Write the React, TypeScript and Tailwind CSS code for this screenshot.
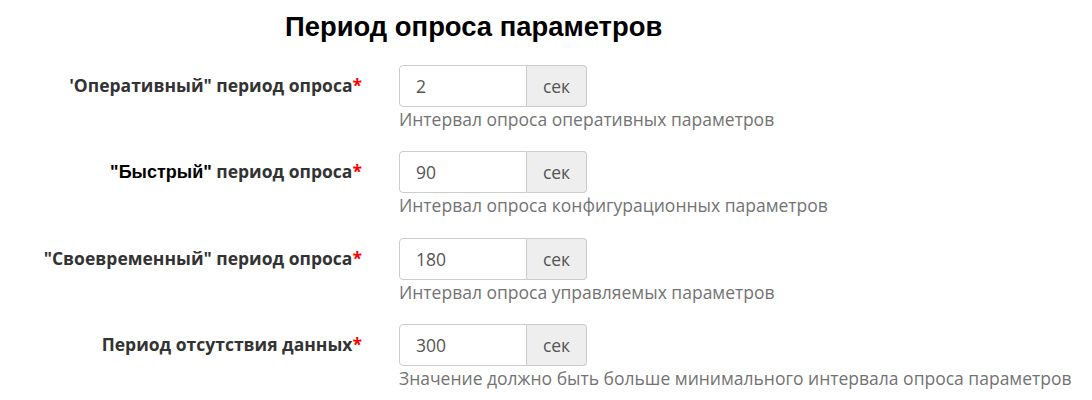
const openSans = { fontFamily: '"Open Sans", "Liberation Sans", sans-serif' };

type Row = {
  label: React.ReactNode;
  value: string;
  help: string;
};

const rows: Row[] = [
  {
    label: <>'Оперативный" период опроса</>,
    value: '2',
    help: 'Интервал опроса оперативных параметров',
  },
  {
    label: (
      <>
        <span className="font-['Liberation_Sans',Arial,sans-serif] text-[18px] text-black">"Быстрый"</span> период опроса
      </>
    ),
    value: '90',
    help: 'Интервал опроса конфигурационных параметров',
  },
  {
    label: <>"Своевременный" период опроса</>,
    value: '180',
    help: 'Интервал опроса управляемых параметров',
  },
  {
    label: <>Период отсутствия данных</>,
    value: '300',
    help: 'Значение должно быть больше минимального интервала опроса параметров',
  },
];

function FieldRow({ row }: { row: Row }) {
  return (
    <div className="flex items-start">
      <div className="flex h-[42px] w-[362px] shrink-0 items-center justify-end">
        <span className="text-[17.5px] font-bold leading-none text-[#333]">
          {row.label}
          <span className="text-[#ff0000]">*</span>
        </span>
      </div>
      <div className="ml-[37px] flex flex-col">
        <div className="flex h-[42px]">
          <input
            readOnly
            value={row.value}
            className="h-[42px] w-[128px] rounded-l-[4px] border border-[#ccc] bg-white px-[16px] text-[17.5px] text-[#555] outline-none"
            style={openSans}
          />
          <div className="flex h-[42px] w-[60px] items-center justify-center rounded-r-[4px] border border-l-0 border-[#ccc] bg-[#eee] text-[17.5px] text-[#555]">
            сек
          </div>
        </div>
        <p className="mt-[1px] h-[43px] whitespace-nowrap text-[17.5px] leading-[22px] text-[#737373]">{row.help}</p>
      </div>
    </div>
  );
}

export default function App() {
  return (
    <div className="h-[400px] w-[1092px] overflow-hidden bg-white" style={openSans}>
      <h1 className="pt-[11px] pl-[285px] font-['Liberation_Sans',Arial,sans-serif] text-[27.4px] font-bold leading-[32px] text-black">
        Период опроса параметров
      </h1>
      <div className="mt-[22px] flex flex-col gap-[0.33px]">
        {rows.map((r, i) => (
          <FieldRow key={i} row={r} />
        ))}
      </div>
    </div>
  );
}
